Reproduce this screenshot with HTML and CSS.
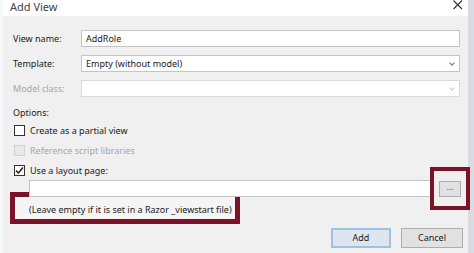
FILE: index.html
```html
<!DOCTYPE html>
<html>
<head>
<meta charset="utf-8">
<link rel="stylesheet" href="styles.css">
</head>
<body>
<div class="window">
  <div class="titlebar">
    <span class="title">Add View</span>
    <svg class="close" width="10" height="10" viewBox="0 0 10 10"><path d="M0.5 0.5 L9 9 M9 0.5 L0.5 9" stroke="#333" stroke-width="1.1" fill="none"/></svg>
  </div>
  <div class="content">
    <div class="form">
      <label class="lbl">View name:</label>
      <div class="field"><span class="val">AddRole</span></div>
      <label class="lbl">Template:</label>
      <div class="field select"><span class="val">Empty (without model)</span><span class="chev"></span></div>
      <label class="lbl disabled">Model class:</label>
      <div class="field select off"><span class="val"></span><span class="chev"></span></div>
    </div>
    <div class="options">Options:</div>
    <div class="check"><span class="box"></span><span>Create as a partial view</span></div>
    <div class="check disabled"><span class="box"></span><span>Reference script libraries</span></div>
    <div class="check"><span class="box on"><svg width="9" height="9" viewBox="0 0 9 9"><path d="M1 4.6 L3.4 7 L8 1.4" stroke="#222" stroke-width="1.5" fill="none"/></svg></span><span>Use a layout page:</span></div>
    <div class="layout-row">
      <div class="field wide"></div>
      <div class="browse">...</div>
    </div>
    <div class="hint">(Leave empty if it is set in a Razor _viewstart file)</div>
    <div class="buttons">
      <div class="btn default">Add</div>
      <div class="btn">Cancel</div>
    </div>
  </div>
  <div class="mark mark-browse"></div>
</div>
</body>
</html>
```
FILE: styles.css
```css
html, body {
  margin: 0;
  padding: 0;
}
body {
  width: 474px;
  height: 253px;
  overflow: hidden;
  background: #d8dce2;
  font-family: "Noto Sans", "Open Sans", sans-serif;
  font-size: 9px;
  color: #1a1a1a;
}
.window {
  position: relative;
  width: 465px;
  height: 253px;
  background: #f0f0f0;
  border-left: 3px solid #f6f8fa;
}
.titlebar {
  height: 16px;
  background: #ffffff;
  display: flex;
  justify-content: space-between;
  align-items: flex-start;
  overflow: hidden;
}
.title {
  margin-left: 7px;
  font-size: 11px;
  line-height: 13px;
  color: #444;
}
.close {
  margin-right: 5px;
}
.content {
  padding: 14px 8px 0 10px;
}
.form {
  display: grid;
  grid-template-columns: 68px 1fr;
  grid-auto-rows: 17px;
  row-gap: 8px;
}
.lbl {
  line-height: 17px;
}
.lbl.disabled {
  color: #a6a6a6;
}
.field {
  box-sizing: border-box;
  height: 17px;
  background: #fff;
  border: 1px solid #c4c4c4;
  display: flex;
  align-items: center;
  justify-content: space-between;
  padding: 0 5px 0 4px;
}
.field.off {
  border-color: #dadada;
}
.val {
  line-height: 15px;
}
.chev {
  width: 3px;
  height: 3px;
  border-right: 1px solid #777;
  border-bottom: 1px solid #777;
  transform: rotate(45deg);
  margin-top: -2px;
}
.off .chev {
  border-color: #c8c8c8;
}
.options {
  margin-top: 8px;
  line-height: 15px;
}
.check {
  height: 20px;
  display: flex;
  align-items: center;
  gap: 5px;
}
.box {
  box-sizing: border-box;
  width: 11px;
  height: 11px;
  margin-left: 1px;
  border: 1px solid #333;
  background: #fff;
  display: flex;
  align-items: center;
  justify-content: center;
}
.check.disabled {
  color: #a6a6a6;
}
.check.disabled .box {
  border-color: #d2d2d2;
  background: #e8e8e8;
}
.layout-row {
  margin-left: 16px;
  margin-right: -1px;
  display: flex;
  align-items: center;
  gap: 5px;
}
.field.wide {
  flex: 1;
}
.browse {
  box-sizing: border-box;
  width: 22px;
  height: 16px;
  margin-top: 1px;
  background: #e1e1e1;
  border: 1px solid #adadad;
  font-size: 8px;
  line-height: 10px;
  color: #444;
  text-align: center;
}
.hint {
  box-sizing: border-box;
  width: 230px;
  height: 32px;
  margin-top: -5px;
  margin-left: -3px;
  padding: 5px 0 0 14px;
  line-height: 15px;
  white-space: nowrap;
  background: #f5f5f5;
  border: 5px solid #7a1228;
}
.buttons {
  margin-top: 4px;
  margin-right: -3px;
  display: flex;
  justify-content: flex-end;
  gap: 10px;
}
.btn {
  box-sizing: border-box;
  width: 62px;
  height: 20px;
  background: #e1e1e1;
  border: 1px solid #adadad;
  line-height: 18px;
  text-align: center;
}
.btn.default {
  width: 60px;
  background: #dde6ef;
  border: 2px solid #9fc2e2;
  line-height: 16px;
}
.mark {
  position: absolute;
  box-sizing: border-box;
  border: 4px solid #7a1228;
}
.mark-browse {
  left: 427px;
  top: 167px;
  width: 40px;
  height: 43px;
}
```
